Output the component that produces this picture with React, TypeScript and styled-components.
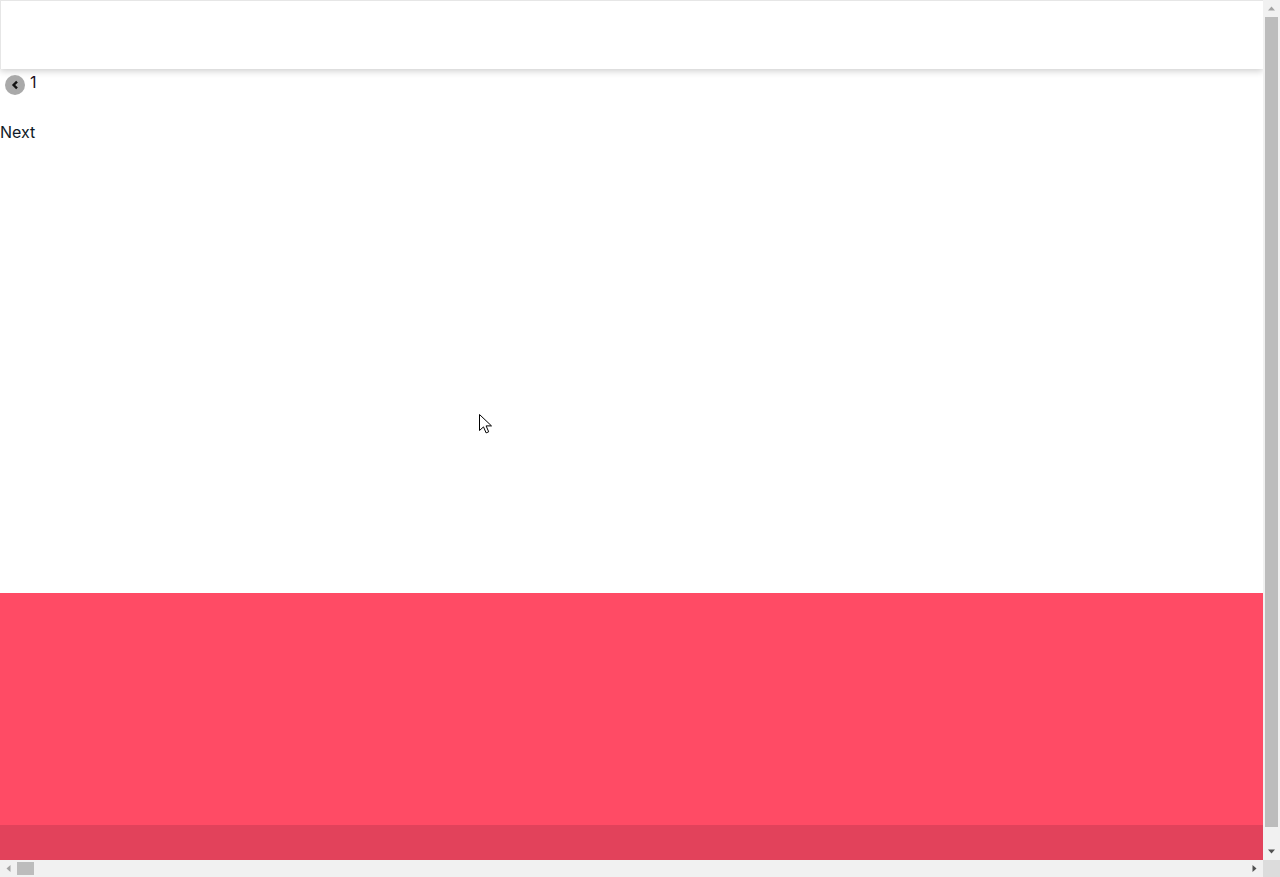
import React from "react";
import styled, { createGlobalStyle } from "styled-components";

const Global = createGlobalStyle`
  html, body { margin: 0; padding: 0; height: 100%; overflow: hidden; background: #fff; }
  body { font-family: Inter, "Liberation Sans", sans-serif; font-size: 16px; color: #0f1a28; }
`;

const Win = styled.div`
  position: relative;
  width: 1280px;
  height: 877px;
  display: grid;
  grid-template-columns: 1263px 17px;
  grid-template-rows: 860px 17px;
  overflow: hidden;
`;

const Viewport = styled.main`
  display: flex;
  flex-direction: column;
  background: #fff;
  overflow: hidden;
`;

const Header = styled.header`
  flex: 0 0 69px;
  box-sizing: border-box;
  border: 1px solid #e6e6e6;
  border-width: 1px 0 0 1px;
  background: #fff;
  box-shadow: 0 2px 7px rgba(0, 0, 0, 0.2);
`;

const Pager = styled.nav`
  flex: 0 0 524px;
  display: flex;
  flex-direction: column;
`;

const PageRow = styled.div`
  display: flex;
  align-items: flex-start;
  gap: 5px;
  padding: 6px 0 0 5px;
  height: 53px;
  box-sizing: border-box;
`;

const BackButton = styled.button`
  width: 20px;
  height: 20px;
  margin: 0;
  padding: 0;
  border: 0;
  border-radius: 50%;
  background: #a9a9a9;
  display: flex;
  align-items: center;
  justify-content: center;
`;

const PageNumber = styled.span`
  line-height: 14px;
  color: #1c1020;
`;

const NextLink = styled.div`
  line-height: 20px;
`;

const Footer = styled.footer`
  flex: 1;
  display: flex;
  flex-direction: column;
  justify-content: flex-end;
  background: #ff4b65;
`;

const FooterBar = styled.div`
  height: 35px;
  background: #e2425b;
`;

const VTrack = styled.div`
  background: #f1f1f1;
  display: flex;
  flex-direction: column;
  align-items: center;
`;

const HTrack = styled.div`
  background: #f1f1f1;
  display: flex;
  align-items: center;
`;

const ArrowBox = styled.div`
  flex: 0 0 17px;
  height: 17px;
  width: 17px;
  display: flex;
  align-items: center;
  justify-content: center;
`;

const VThumb = styled.div`
  width: 13px;
  height: 810px;
  background: #bcbcbc;
`;

const VGap = styled.div`
  flex: 1;
`;

const HThumb = styled.div`
  width: 17px;
  height: 13px;
  background: #bcbcbc;
`;

const Corner = styled.div`
  background: #dcdcdc;
`;

const Pointer = styled.svg`
  position: absolute;
  left: 479px;
  top: 414px;
`;

const Tri = ({ d, fill }: { d: string; fill: string }) => (
  <svg width="9" height="9" viewBox="0 0 9 9">
    <path d={d} fill={fill} />
  </svg>
);

export default function App() {
  return (
    <>
      <Global />
      <Win>
        <Viewport>
          <Header />
          <Pager>
            <PageRow>
              <BackButton aria-label="Previous">
                <svg width="8" height="10" viewBox="0 0 8 10">
                  <path d="M6 1.6 2.6 5 6 8.4" fill="none" stroke="#111" strokeWidth="2.4" />
                </svg>
              </BackButton>
              <PageNumber>1</PageNumber>
            </PageRow>
            <NextLink>Next</NextLink>
          </Pager>
          <Footer>
            <FooterBar />
          </Footer>
        </Viewport>
        <VTrack>
          <ArrowBox>
            <Tri d="M1 6.5h7L4.5 2.5z" fill="#a3a3a3" />
          </ArrowBox>
          <VThumb />
          <VGap />
          <ArrowBox>
            <Tri d="M1 2.5h7L4.5 6.5z" fill="#505050" />
          </ArrowBox>
        </VTrack>
        <HTrack>
          <ArrowBox>
            <Tri d="M6.5 1v7L2.5 4.5z" fill="#a3a3a3" />
          </ArrowBox>
          <HThumb />
          <VGap />
          <ArrowBox>
            <Tri d="M2.5 1v7L6.5 4.5z" fill="#505050" />
          </ArrowBox>
        </HTrack>
        <Corner />
        <Pointer width="13" height="20" viewBox="0 0 13 20">
          <path
            d="M.5.5v16l4-3.6 2.6 6 2.6-1.1-2.6-5.9h5.4z"
            fill="#fff"
            stroke="#000"
            strokeWidth="1"
            strokeLinejoin="miter"
          />
        </Pointer>
      </Win>
    </>
  );
}
